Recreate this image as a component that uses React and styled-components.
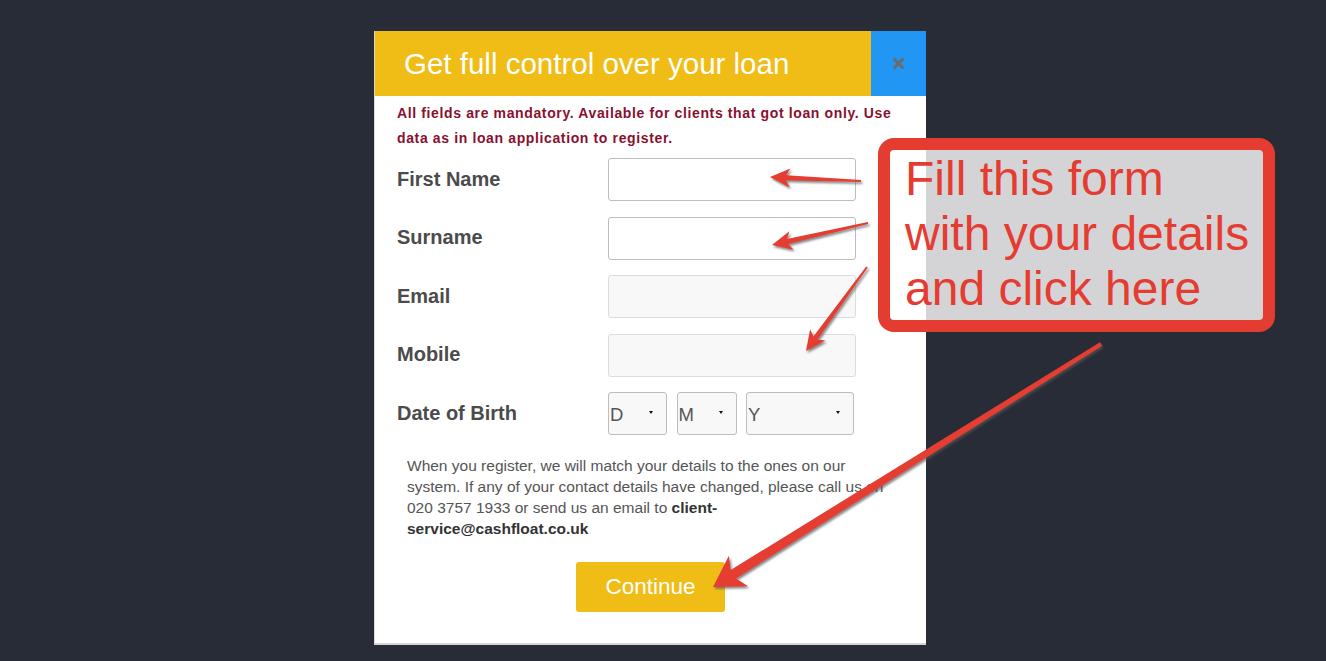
import React from 'react';
import styled, { createGlobalStyle } from 'styled-components';

const GlobalStyle = createGlobalStyle`
  html, body {
    margin: 0;
    padding: 0;
    background: #282c36;
  }
  body {
    font-family: "Liberation Sans", Arial, sans-serif;
  }
`;

const Page = styled.div`
  position: relative;
  width: 1326px;
  height: 661px;
  overflow: hidden;
  padding-top: 31px;
  box-sizing: border-box;
`;

const Modal = styled.div`
  width: 551px;
  margin-left: 375px;
  background: #ffffff;
  border-bottom: 2px solid #d6d6d6;
  box-shadow: -1px 0 0 #d6d6d6;
  padding-bottom: 31px;
`;

const Header = styled.div`
  display: flex;
  height: 65px;
`;

const Title = styled.h1`
  flex: 1;
  margin: 0;
  display: flex;
  align-items: center;
  padding-left: 29px;
  background: #f0bc16;
  color: #ffffff;
  font-size: 29.5px;
  font-weight: normal;
`;

const CloseButton = styled.button`
  width: 55px;
  border: none;
  background: #2196f3;
  display: flex;
  align-items: center;
  justify-content: center;
  padding: 0;
  cursor: pointer;
`;

const Body = styled.div`
  padding: 5px 22px 0;
`;

const Notice = styled.p`
  margin: 0;
  color: #8a0f2e;
  font-size: 14px;
  font-weight: bold;
  letter-spacing: 0.63px;
  line-height: 25px;
`;

const Form = styled.div`
  display: grid;
  grid-template-columns: 211px 1fr;
  grid-auto-rows: 43px;
  row-gap: 15.5px;
  margin-top: 7px;
`;

const Label = styled.label`
  display: flex;
  align-items: center;
  padding-bottom: 1px;
  color: #4b4b4b;
  font-size: 20px;
  font-weight: bold;
`;

const Input = styled.input`
  width: 248px;
  height: 43px;
  box-sizing: border-box;
  border: 1px solid ${(p) => (p.$muted ? '#dcdcdc' : '#bdbdbd')};
  background: ${(p) => (p.$muted ? '#f8f8f8' : '#ffffff')};
  border-radius: 3px;
  outline: none;
`;

const DateRow = styled.div`
  display: flex;
  gap: 9.5px;
`;

const Select = styled.div`
  width: ${(p) => p.$w}px;
  height: 43px;
  box-sizing: border-box;
  border: 1px solid #bdbdbd;
  border-radius: 3px;
  background: #f8f8f8;
  display: flex;
  align-items: center;
  justify-content: space-between;
  padding: 2px 13px 0 1px;
  color: #555555;
  font-size: 18.5px;
`;

const Caret = styled.span`
  width: 0;
  height: 0;
  border-left: 2.5px solid transparent;
  border-right: 2.5px solid transparent;
  border-top: 3px solid #111111;
  margin-bottom: 4px;
`;

const Info = styled.p`
  margin: 20px 0 0;
  padding: 0 10px;
  color: #555555;
  font-size: 15.5px;
  line-height: 21px;
`;

const Strong = styled.b`
  color: #333333;
`;

const ButtonRow = styled.div`
  display: flex;
  justify-content: center;
  margin-top: 23px;
`;

const ContinueButton = styled.button`
  width: 149px;
  height: 50px;
  border: none;
  border-radius: 3px;
  background: #f0bc16;
  color: #ffffff;
  font-family: "Liberation Sans", Arial, sans-serif;
  font-size: 22.5px;
  cursor: pointer;
`;

const Callout = styled.div`
  position: absolute;
  left: 878px;
  top: 138px;
  width: 397px;
  height: 194px;
  box-sizing: border-box;
  border: 12px solid #e53c31;
  border-radius: 16px;
  background: rgba(255, 255, 255, 0.8);
  padding: 1px 0 0 15px;
  color: #e53c31;
  font-size: 48px;
  line-height: 55px;
`;

const Overlay = styled.svg`
  position: absolute;
  left: 0;
  top: 0;
  pointer-events: none;
`;

// builds a tapered arrow polygon from tail to tip
const arrowPoints = ([x0, y0], [x1, y1], w0, w1, headLen, headW, notch) => {
  const len = Math.hypot(x1 - x0, y1 - y0);
  const dx = (x1 - x0) / len;
  const dy = (y1 - y0) / len;
  const nx = -dy;
  const ny = dx;
  const bx = x1 - dx * headLen;
  const by = y1 - dy * headLen;
  const wx = bx - dx * notch;
  const wy = by - dy * notch;
  const pts = [
    [x0 + (nx * w0) / 2, y0 + (ny * w0) / 2],
    [bx + (nx * w1) / 2, by + (ny * w1) / 2],
    [wx + (nx * headW) / 2, wy + (ny * headW) / 2],
    [x1, y1],
    [wx - (nx * headW) / 2, wy - (ny * headW) / 2],
    [bx - (nx * w1) / 2, by - (ny * w1) / 2],
    [x0 - (nx * w0) / 2, y0 - (ny * w0) / 2],
  ];
  return pts.map((p) => p.map((v) => v.toFixed(1)).join(',')).join(' ');
};

const arrows = [
  { tail: [861, 181], tip: [770, 177], w0: 2, w1: 5, head: 16, headW: 19, notch: 4 },
  { tail: [868, 223], tip: [772, 245], w0: 2, w1: 5, head: 16, headW: 19, notch: 4 },
  { tail: [867, 267], tip: [806, 351], w0: 2, w1: 5, head: 16, headW: 19, notch: 4 },
  { tail: [1101, 344], tip: [713, 587], w0: 4, w1: 10, head: 24, headW: 36, notch: 6 },
];

export default function App() {
  return (
    <>
      <GlobalStyle />
      <Page>
        <Modal>
          <Header>
            <Title>Get full control over your loan</Title>
            <CloseButton aria-label="Close">
              <svg width="11" height="11" viewBox="0 0 11 11">
                <path d="M1.5 1.5 L9.5 9.5 M9.5 1.5 L1.5 9.5" stroke="#6b6b6b" strokeWidth="3" strokeLinecap="square" />
              </svg>
            </CloseButton>
          </Header>
          <Body>
            <Notice>
              All fields are mandatory. Available for clients that got loan only. Use data as in loan application to register.
            </Notice>
            <Form>
              <Label>First Name</Label>
              <Input />
              <Label>Surname</Label>
              <Input />
              <Label>Email</Label>
              <Input $muted />
              <Label>Mobile</Label>
              <Input $muted />
              <Label>Date of Birth</Label>
              <DateRow>
                <Select $w={59}>D<Caret /></Select>
                <Select $w={60}>M<Caret /></Select>
                <Select $w={108}>Y<Caret /></Select>
              </DateRow>
            </Form>
            <Info>
              When you register, we will match your details to the ones on our system. If any of your contact details have
              changed, please call us on 020 3757 1933 or send us an email to <Strong>client-service@cashfloat.co.uk</Strong>
            </Info>
            <ButtonRow>
              <ContinueButton>Continue</ContinueButton>
            </ButtonRow>
          </Body>
        </Modal>

        <Callout>
          Fill this form
          <br />
          with your details
          <br />
          and click here
        </Callout>

        <Overlay width="1326" height="661" viewBox="0 0 1326 661">
          <defs>
            <filter id="arrowShadow" x="-10%" y="-10%" width="120%" height="120%">
              <feDropShadow dx="1.5" dy="2" stdDeviation="0.8" floodColor="#555" floodOpacity="0.7" />
            </filter>
          </defs>
          {arrows.map((a, i) => (
            <polygon
              key={i}
              points={arrowPoints(a.tail, a.tip, a.w0, a.w1, a.head, a.headW, a.notch)}
              fill="#e53c31"
              filter="url(#arrowShadow)"
            />
          ))}
        </Overlay>
      </Page>
    </>
  );
}
